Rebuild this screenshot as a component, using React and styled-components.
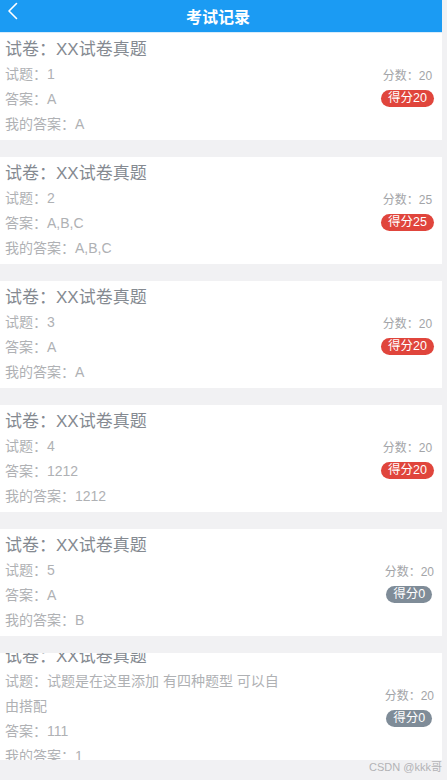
import React from "react";
import styled, { createGlobalStyle } from "styled-components";

const records = [
	{ id: 1, question: "1", answer: "A", mine: "A", full: 20, got: 20 },
	{ id: 2, question: "2", answer: "A,B,C", mine: "A,B,C", full: 25, got: 25 },
	{ id: 3, question: "3", answer: "A", mine: "A", full: 20, got: 20 },
	{ id: 4, question: "4", answer: "1212", mine: "1212", full: 20, got: 20 },
	{ id: 5, question: "5", answer: "A", mine: "B", full: 20, got: 0 },
	{
		id: 6,
		question: "试题是在这里添加 有四种题型 可以自由搭配",
		answer: "111",
		mine: "1",
		full: 20,
		got: 0,
	},
];

const ExamRecords = () => {
	return (
		<>
			<GlobalStyle />
			<Page>
				<Header>
					<BackButton>
						<svg width="11" height="18" viewBox="0 0 11 18" fill="none">
							<path d="M9.5 1.5L2 9L9.5 16.5" stroke="#fff" strokeWidth="1.6" strokeLinecap="round" strokeLinejoin="round" />
						</svg>
					</BackButton>
					<Title>考试记录</Title>
				</Header>
				{records.map((item) => {
					return (
						<Card key={item.id}>
							<Info>
								<PaperName>试卷：XX试卷真题</PaperName>
								<Line>试题：{item.question}</Line>
								<Line>答案：{item.answer}</Line>
								<Line>我的答案：{item.mine}</Line>
							</Info>
							<Score>
								<FullScore>分数：{item.full}</FullScore>
								<Badge $pass={item.got > 0}>得分{item.got}</Badge>
							</Score>
						</Card>
					);
				})}
				<Watermark>CSDN @kkk哥</Watermark>
			</Page>
		</>
	);
};

const GlobalStyle = createGlobalStyle`
	body {
		margin: 0;
		background: #f1f1f3;
		font-family: "Liberation Sans", "Noto Sans CJK SC", sans-serif;
	}
`;

const Page = styled.div`
	width: 442px;
	height: 780px;
	overflow: hidden;
	position: relative;
	background: #f1f1f3;
`;

const Header = styled.div`
	height: 33px;
	background: #1b9bf3;
	display: flex;
	align-items: center;
	justify-content: center;
	position: relative;
	border-bottom: 1px solid #d9ecfa;
	box-sizing: border-box;
`;

const BackButton = styled.div`
	position: absolute;
	left: 7px;
	top: 2px;
	display: flex;
`;

const Title = styled.span`
	color: #fff;
	font-size: 16px;
	font-weight: bold;
	margin-left: -6px;
`;

const Card = styled.div`
	height: 107px;
	background: #fff;
	margin-bottom: 17px;
	display: flex;
	align-items: center;
	padding: 0 8px 0 5px;
	overflow: hidden;
`;

const Info = styled.div`
	width: 280px;
`;

const PaperName = styled.div`
	font-size: 17px;
	line-height: 25px;
	color: #858a91;
`;

const Line = styled.div`
	font-size: 14px;
	line-height: 25px;
	color: #afb1b4;
`;

const Score = styled.div`
	margin-left: auto;
	display: flex;
	flex-direction: column;
	align-items: center;
`;

const FullScore = styled.span`
	font-size: 12px;
	line-height: 18px;
	color: #a3a5a8;
`;

const Badge = styled.span`
	margin-top: 5px;
	height: 17px;
	line-height: 17px;
	padding: 0 7px;
	border-radius: 9px;
	font-size: 12.5px;
	color: #fff;
	background: ${(p) => (p.$pass ? "#e0453c" : "#7f8c98")};
`;

const Watermark = styled.span`
	position: absolute;
	right: 0;
	bottom: 6px;
	font-size: 11px;
	color: #b3b3b6;
`;

export default ExamRecords;
